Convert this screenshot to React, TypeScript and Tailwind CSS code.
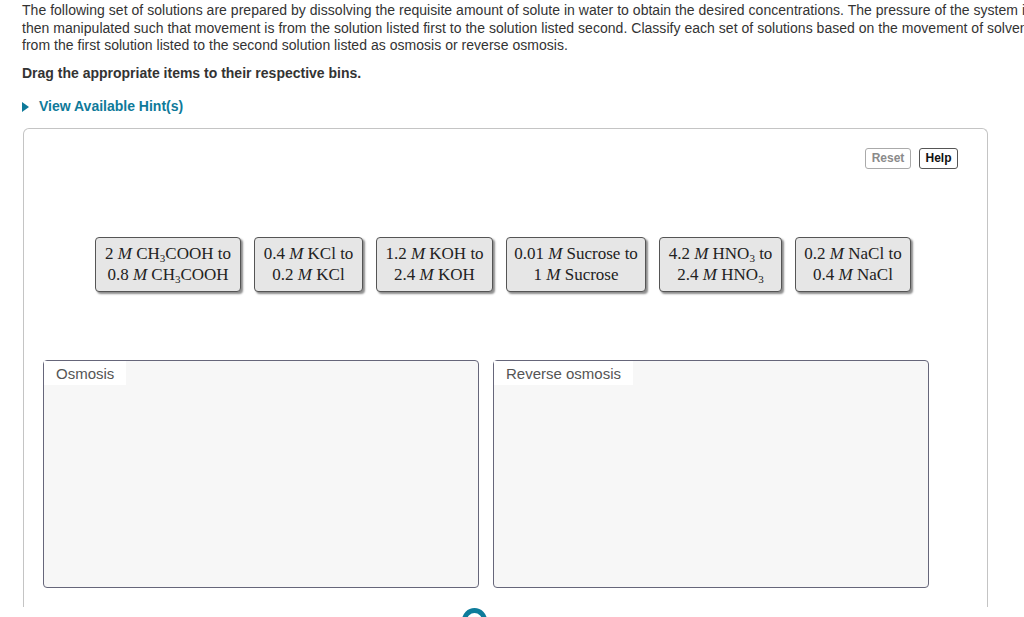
import React from "react";

const Tile = ({ w, l1, l2 }: { w: number; l1: React.ReactNode; l2: React.ReactNode }) => (
  <div
    style={{ width: w }}
    className="h-[55px] flex flex-col items-center justify-center bg-[#e6e6e6] border border-[#555] rounded-[4px] shadow-[2px_2px_2px_rgba(0,0,0,0.45)] font-['Liberation_Serif','Times_New_Roman',serif] text-[17px] leading-[21px] text-[#222] whitespace-nowrap"
  >
    <div>{l1}</div>
    <div>{l2}</div>
  </div>
);

const M = () => <i>M</i>;
const S3 = () => <sub className="text-[11px]">3</sub>;

export default function App() {
  return (
    <div className="relative w-[1024px] h-[617px] overflow-hidden bg-white font-['Liberation_Sans',Arial,sans-serif]">
      <div className="pl-[22px] pt-[2px] text-[14px] leading-[17.5px] text-[#333] whitespace-nowrap">
        <p className="tracking-[0.03px]">
          The following set of solutions are prepared by dissolving the requisite amount of solute in water to obtain the desired concentrations. The pressure of the system is
          <br />
          then manipulated such that movement is from the solution listed first to the solution listed second. Classify each set of solutions based on the movement of solvent
          <br />
          from the first solution listed to the second solution listed as osmosis or reverse osmosis.
        </p>
        <p className="mt-[10px] font-bold">Drag the appropriate items to their respective bins.</p>
        <div className="mt-[16px] flex items-center font-bold text-[#0f7a9a]">
          <svg width="7" height="10" viewBox="0 0 7 10" className="mr-[10px]">
            <path d="M0 0 L7 5 L0 10 Z" fill="#0f7a9a" />
          </svg>
          <span>View Available Hint(s)</span>
        </div>
      </div>

      <div className="ml-[23px] mt-[12px] w-[965px] h-[479px] border border-b-0 border-[#c4c4c4] rounded-t-[6px]">
        <div className="flex justify-end gap-[8px] pt-[19px] pr-[29px]">
          <button className="h-[21px] w-[46px] border border-[#aaa] rounded-[3px] text-[12px] font-bold text-[#8a8a8a] bg-white">
            Reset
          </button>
          <button className="h-[21px] w-[39px] border border-[#555] rounded-[3px] text-[12px] font-bold text-[#111] bg-white">
            Help
          </button>
        </div>

        <div className="mt-[68px] pl-[71px] flex gap-[13px]">
          <Tile w={146} l1={<>2 <M /> CH<S3 />COOH to</>} l2={<>0.8 <M /> CH<S3 />COOH</>} />
          <Tile w={109} l1={<>0.4 <M /> KCl to</>} l2={<>0.2 <M /> KCl</>} />
          <Tile w={117} l1={<>1.2 <M /> KOH to</>} l2={<>2.4 <M /> KOH</>} />
          <Tile w={140} l1={<>0.01 <M /> Sucrose to</>} l2={<>1 <M /> Sucrose</>} />
          <Tile w={123} l1={<>4.2 <M /> HNO<S3 /> to</>} l2={<>2.4 <M /> HNO<S3 /></>} />
          <Tile w={116} l1={<>0.2 <M /> NaCl to</>} l2={<>0.4 <M /> NaCl</>} />
        </div>

        <div className="mt-[68px] pl-[19px] flex gap-[14px]">
          {["Osmosis", "Reverse osmosis"].map((t) => (
            <div key={t} className="w-[436px] h-[228px] bg-[#f7f7f7] border border-[#66667a] rounded-[4px]">
              <span className="inline-block bg-white px-[12px] h-[24px] leading-[25px] text-[15px] text-[#555]">
                {t}
              </span>
            </div>
          ))}
        </div>
      </div>

      <div className="ml-[462px] mt-[1px] w-[25px] h-[25px] rounded-full border-[5px] border-[#0e7c9b]" />
    </div>
  );
}
